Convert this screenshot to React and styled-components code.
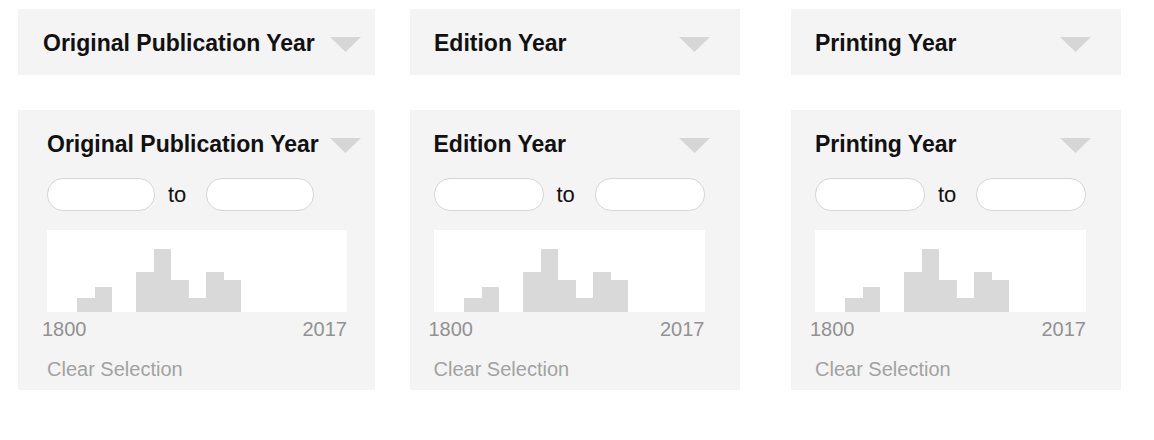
import React from 'react'
import styled, { createGlobalStyle } from 'styled-components'

const GlobalStyle = createGlobalStyle`
  body {
    margin: 0;
    background: #fff;
    font-family: "Liberation Sans", Arial, Helvetica, sans-serif;
  }
`

const Page = styled.div`
  display: grid;
  grid-template-columns: 392px 381px 330px;
  row-gap: 35px;
  padding: 9px 0 0 18px;
  align-items: start;
`

const Panel = styled.div`
  box-sizing: border-box;
  width: ${({ w }) => w}px;
  padding: 0 ${({ padR }) => padR}px 0 ${({ padL }) => padL}px;
  background: #f4f4f4;
`

const Header = styled.div`
  box-sizing: border-box;
  height: 66px;
  padding-top: 2px;
  display: flex;
  align-items: center;
  justify-content: space-between;
`

const Title = styled.div`
  font-size: 23px;
  font-weight: bold;
  color: #111;
  white-space: nowrap;
`

const Caret = styled.svg`
  flex: none;
  width: 31px;
  height: 15px;
  margin-top: 3px;
  margin-left: 10px;
`

const Range = styled.div`
  display: flex;
  align-items: center;
  margin-top: 2px;
`

const YearInput = styled.input`
  box-sizing: border-box;
  width: ${({ w }) => w}px;
  height: 33px;
  border: 1.5px solid #d6d6d6;
  border-radius: 16px;
  background: #fff;
  outline: none;
  padding: 0 12px;
  font: inherit;
`

const Sep = styled.span`
  font-size: 22px;
  color: #111;
  margin: 0 20px 0 13px;
`

const Histogram = styled.svg`
  display: block;
  margin-top: 19px;
  width: ${({ w }) => w}px;
  height: 82px;
  background: #fff;
  shape-rendering: crispEdges;
`

const Axis = styled.div`
  display: flex;
  justify-content: space-between;
  width: ${({ w }) => w + 5}px;
  margin: 5px 0 0 -5px;
  font-size: 20px;
  line-height: 24px;
  color: #929292;
`

const ClearLink = styled.div`
  margin-top: 15.5px;
  padding-bottom: 9.5px;
  font-size: 20px;
  line-height: 24px;
  color: #a2a2a2;
`

// x, width, height in px from the left/bottom of the chart
const bins = [
  [30, 18, 14],
  [48, 17, 25],
  [89, 18, 40],
  [107, 17, 63],
  [124, 18, 32],
  [142, 17, 14],
  [159, 18, 40],
  [177, 17, 32],
]

const Arrow = () => (
  <Caret viewBox="0 0 31 15">
    <polygon points="0,0 31,0 15.5,15" fill="#d6d6d6" />
  </Caret>
)

const filters = [
  { title: 'Original Publication Year', w: 357, padR: 14, padTop: 25, padL: 29, histW: 300, inputW: 108 },
  { title: 'Edition Year', w: 330, padR: 30, padTop: 24, padL: 23.5, histW: 271, inputW: 110 },
  { title: 'Printing Year', w: 330, padR: 30, padTop: 24, padL: 24, histW: 271, inputW: 110 },
]

const ClosedFilter = ({ f }) => (
  <Panel w={f.w} padL={f.padTop} padR={f.padR}>
    <Header>
      <Title>{f.title}</Title>
      <Arrow />
    </Header>
  </Panel>
)

const OpenFilter = ({ f }) => (
  <Panel w={f.w} padL={f.padL} padR={f.padR}>
    <Header>
      <Title>{f.title}</Title>
      <Arrow />
    </Header>
    <Range>
      <YearInput w={f.inputW} />
      <Sep>to</Sep>
      <YearInput w={f.inputW} />
    </Range>
    <Histogram w={f.histW} viewBox={`0 0 ${f.histW} 82`}>
      {bins.map(([x, bw, h], i) => (
        <rect key={i} x={x} y={82 - h} width={bw} height={h} fill="#d9d9d9" />
      ))}
    </Histogram>
    <Axis w={f.histW}>
      <span>1800</span>
      <span>2017</span>
    </Axis>
    <ClearLink>Clear Selection</ClearLink>
  </Panel>
)

const App = () => (
  <>
    <GlobalStyle />
    <Page>
      {filters.map((f) => (
        <ClosedFilter key={'c' + f.title} f={f} />
      ))}
      {filters.map((f) => (
        <OpenFilter key={'o' + f.title} f={f} />
      ))}
    </Page>
  </>
)

export default App
